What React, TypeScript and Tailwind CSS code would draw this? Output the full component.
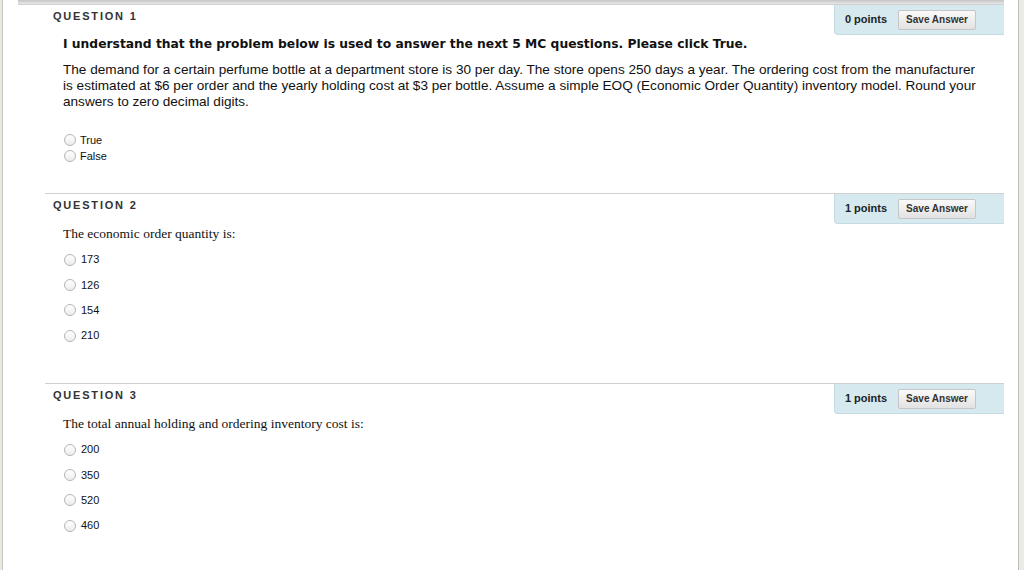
import React from 'react';

type Question = {
  label: string;
  points: string;
  prompt: React.ReactNode;
  options: string[];
};

const sans = "font-['Liberation_Sans',Arial,sans-serif]";

const Radio: React.FC = () => (
  <span className="inline-block ml-[1px] w-[12px] h-[12px] rounded-full border border-[#b5b5b5] bg-gradient-to-b from-white to-[#ededed] shrink-0" />
);

const PointsBox: React.FC<{ points: string }> = ({ points }) => (
  <div className="flex items-center h-[30px] pl-[10px] pr-[28px] bg-[#d5e9ef] border-l border-b border-[#c3dbe3] rounded-bl-[4px]">
    <span className={`${sans} text-[11px] font-bold text-[#222]`}>{points}</span>
    <button className={`${sans} ml-[11px] h-[20px] px-[7px] text-[10px] font-bold text-[#333] bg-gradient-to-b from-[#fafafa] to-[#e2e2e2] border border-[#c6c6c6] rounded-[2px]`}>
      Save Answer
    </button>
  </div>
);

const Header: React.FC<{ label: string; points: string }> = ({ label, points }) => (
  <div className="flex items-start justify-between h-[30px]">
    <span className={`${sans} pl-[8px] pt-[5px] leading-[12px] text-[11px] font-bold tracking-[1.8px] text-[#333]`}>{label}</span>
    <PointsBox points={points} />
  </div>
);

const questions: Question[] = [
  {
    label: 'QUESTION 2',
    points: '1 points',
    prompt: 'The economic order quantity is:',
    options: ['173', '126', '154', '210'],
  },
  {
    label: 'QUESTION 3',
    points: '1 points',
    prompt: 'The total annual holding and ordering inventory cost is:',
    options: ['200', '350', '520', '460'],
  },
];

const App: React.FC = () => {
  return (
    <div className="flex w-[1024px] h-[570px] overflow-hidden bg-white">
      <div className="w-[3px] bg-[#e9e8e0] border-r border-[#c9c9c4]" />
      <div className="flex-1 flex flex-col">
        {/* top shade */}
        <div className="ml-[15px] mr-[14px] h-[4px] shrink-0 bg-gradient-to-b from-[#c4c4c4] to-[#e8e8e8]" />

        {/* question 1 */}
        <section className="ml-[15px] mr-[14px] border-t border-[#d0d0d0] h-[189px] shrink-0">
          <div className="flex items-start justify-between h-[30px]">
            <span className={`${sans} pl-[35px] pt-[5px] leading-[12px] text-[11px] font-bold tracking-[1.8px] text-[#333]`}>QUESTION 1</span>
            <PointsBox points="0 points" />
          </div>
          <div className="pl-[45px] pr-[24px]">
            <p className="font-['DejaVu_Sans',sans-serif] font-bold text-[12.3px] leading-[18px] text-[#111]">
              I understand that the problem below is used to answer the next 5 MC questions. Please click True.
            </p>
            <p className={`${sans} mt-[9px] text-[13.6px] leading-[16px] text-[#111]`}>
              The demand for a certain perfume bottle at a department store is 30 per day. The store opens 250 days a year. The ordering cost from the manufacturer is estimated at $6 per order and the yearly holding cost at $3 per bottle. Assume a simple EOQ (Economic Order Quantity) inventory model. Round your answers to zero decimal digits.
            </p>
            <div className="mt-[22px] flex flex-col">
              {['True', 'False'].map((o) => (
                <label key={o} className="flex items-center h-[16px] gap-[4px]">
                  <Radio />
                  <span className={`${sans} text-[11px] text-[#111]`}>{o}</span>
                </label>
              ))}
            </div>
          </div>
        </section>

        {questions.map((q) => (
          <section key={q.label} className="ml-[42px] mr-[14px] border-t border-[#d0d0d0] h-[190px] shrink-0">
            <Header label={q.label} points={q.points} />
            <div className="pl-[18px]">
              <p className="pt-[1px] font-['Liberation_Serif','Times_New_Roman',serif] text-[13.5px] leading-[18px] text-[#111]">{q.prompt}</p>
              <div className="mt-[4px] flex flex-col">
                {q.options.map((o) => (
                  <label key={o} className="flex items-center h-[25.33px] gap-[5px]">
                    <Radio />
                    <span className={`${sans} text-[11px] text-[#111]`}>{o}</span>
                  </label>
                ))}
              </div>
            </div>
          </section>
        ))}
      </div>
      <div className="w-[6px] bg-[#ecebe3] border-l border-[#bdbdb8]" />
    </div>
  );
};

export default App;
